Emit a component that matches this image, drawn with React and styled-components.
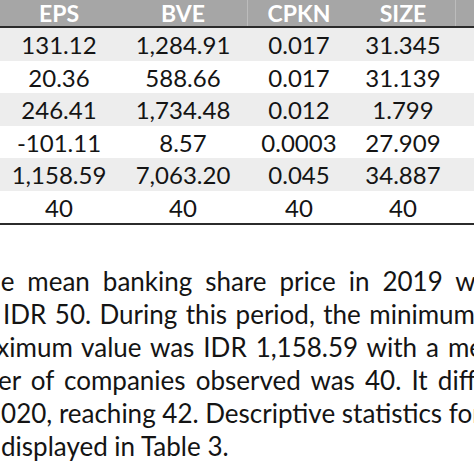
import React from 'react';
import styled, { createGlobalStyle } from 'styled-components';

const Global = createGlobalStyle`
  html, body { margin: 0; padding: 0; background: #fff; }
  body { font-family: Lato, "Liberation Sans", sans-serif; color: #141414; }
`;

const Page = styled.div`
  width: 474px;
  height: 474px;
  overflow: hidden;
  background: #fff;
`;

const cols = '118px 130px 102px 106px 1fr';

const Table = styled.div`
  display: flex;
  flex-direction: column;
  border-bottom: 2px solid #2b2b2b;
`;

const HeadRow = styled.div`
  display: grid;
  grid-template-columns: ${cols};
  height: 26px;
  background: #a6a6a6;
  border-bottom: 2px solid #2b2b2b;
`;

const HeadCell = styled.div`
  color: #fff;
  font-weight: 700;
  font-size: 23px;
  line-height: 26px;
  text-align: center;
  box-shadow: ${p => (p.$sep ? 'inset -1px 0 0 #bcbcbc' : 'none')};
`;

const Row = styled.div`
  display: grid;
  grid-template-columns: ${cols};
  height: 32.5px;
  background: ${p => (p.$shade ? '#ededed' : '#fff')};
`;

const Cell = styled.div`
  font-size: 24px;
  line-height: 32.5px;
  padding-top: 1px;
  text-align: center;
  white-space: nowrap;
`;

const Para = styled.div`
  margin-top: 40px;
  font-size: 26px;
  line-height: 33px;
  color: #141414;
`;

const Line = styled.div`
  white-space: nowrap;
  margin-left: ${p => p.$offset}px;
  word-spacing: ${p => p.$spacing}px;
`;

const headers = [
  { t: 'EPS' },
  { t: 'BVE', sep: true },
  { t: 'CPKN' },
  { t: 'SIZE', sep: true },
  { t: '' },
];

const rows = [
  ['131.12', '1,284.91', '0.017', '31.345'],
  ['20.36', '588.66', '0.017', '31.139'],
  ['246.41', '1,734.48', '0.012', '1.799'],
  ['-101.11', '8.57', '0.0003', '27.909'],
  ['1,158.59', '7,063.20', '0.045', '34.887'],
  ['40', '40', '40', '40'],
];

const lines = [
  { text: 'The mean banking share price in 2019 was', offset: -29, spacing: 6.3 },
  { text: 'IDR 50. During this period, the minimum value', offset: 3, spacing: 1.8 },
  { text: 'maximum value was IDR 1,158.59 with a mean', offset: -38, spacing: 2.3 },
  { text: 'number of companies observed was 40. It differs', offset: -67, spacing: 3.5 },
  { text: '2020, reaching 42. Descriptive statistics for', offset: -14, spacing: 0 },
  { text: 'displayed in Table 3.', offset: 1, spacing: 0 },
];

export default function App() {
  return (
    <Page>
      <Global />
      <Table>
        <HeadRow>
          {headers.map((h, i) => (
            <HeadCell key={i} $sep={h.sep}>{h.t}</HeadCell>
          ))}
        </HeadRow>
        {rows.map((r, i) => (
          <Row key={i} $shade={i % 2 === 0}>
            {r.map((v, j) => (
              <Cell key={j}>{v}</Cell>
            ))}
            <Cell />
          </Row>
        ))}
      </Table>
      <Para>
        {lines.map((l, i) => (
          <Line key={i} $offset={l.offset} $spacing={l.spacing}>{l.text}</Line>
        ))}
      </Para>
    </Page>
  );
}
